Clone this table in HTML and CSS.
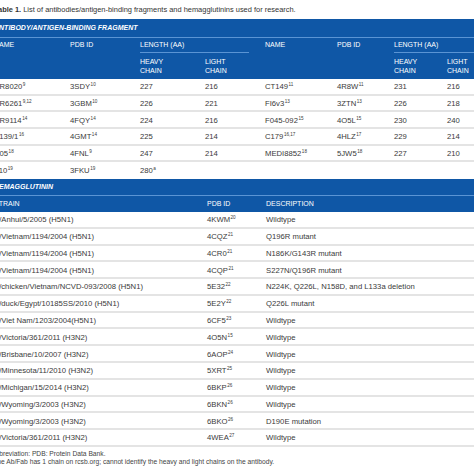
FILE: index.html
```html
<!DOCTYPE html>
<html lang="en">
<head>
<meta charset="utf-8">
<title>Table 1</title>
<link rel="stylesheet" href="styles.css">
</head>
<body>
<div class="page">
  <p class="caption"><b>Table 1.</b> List of antibodies/antigen-binding fragments and hemagglutinins used for research.</p>

  <section class="ab">
    <div class="sec-title">ANTIBODY/ANTIGEN-BINDING FRAGMENT</div>
    <div class="ab-head">
      <div class="h-name c1">NAME</div>
      <div class="h-name c2">PDB ID</div>
      <div class="h-len c3 left-len">LENGTH (AA)</div>
      <div class="h-sub c3">HEAVY<br>CHAIN</div>
      <div class="h-sub c4">LIGHT<br>CHAIN</div>
      <div class="h-name c5">NAME</div>
      <div class="h-name c6">PDB ID</div>
      <div class="h-len c7">LENGTH (AA)</div>
      <div class="h-sub c7">HEAVY<br>CHAIN</div>
      <div class="h-sub c8">LIGHT<br>CHAIN</div>
    </div>
    <div class="ab-row"><span>CR8020<sup>9</sup></span><span>3SDY<sup>10</sup></span><span>227</span><span>216</span><span>CT149<sup>11</sup></span><span>4R8W<sup>11</sup></span><span>231</span><span>216</span></div>
    <div class="ab-row"><span>CR6261<sup>9,12</sup></span><span>3GBM<sup>10</sup></span><span>226</span><span>221</span><span>FI6v3<sup>13</sup></span><span>3ZTN<sup>13</sup></span><span>226</span><span>218</span></div>
    <div class="ab-row"><span>CR9114<sup>14</sup></span><span>4FQY<sup>14</sup></span><span>224</span><span>216</span><span>F045-092<sup>15</sup></span><span>4O5L<sup>15</sup></span><span>230</span><span>240</span></div>
    <div class="ab-row"><span>S139/1<sup>16</sup></span><span>4GMT<sup>14</sup></span><span>225</span><span>214</span><span>C179<sup>16,17</sup></span><span>4HLZ<sup>17</sup></span><span>229</span><span>214</span></div>
    <div class="ab-row"><span>C05<sup>18</sup></span><span>4FNL<sup>9</sup></span><span>247</span><span>214</span><span>MEDI8852<sup>18</sup></span><span>5JW5<sup>18</sup></span><span>227</span><span>210</span></div>
    <div class="ab-row last"><span>F10<sup>19</sup></span><span>3FKU<sup>19</sup></span><span>280<sup>a</sup></span><span></span><span></span><span></span><span></span><span></span></div>
  </section>

  <section class="ha">
    <div class="sec-title ha-title">HEMAGGLUTININ</div>
    <div class="ha-head"><span>STRAIN</span><span>PDB ID</span><span>DESCRIPTION</span></div>
    <div class="ha-row"><span>A/Anhui/5/2005 (H5N1)</span><span>4KWM<sup>20</sup></span><span>Wildtype</span></div>
    <div class="ha-row"><span>A/Vietnam/1194/2004 (H5N1)</span><span>4CQZ<sup>21</sup></span><span>Q196R mutant</span></div>
    <div class="ha-row"><span>A/Vietnam/1194/2004 (H5N1)</span><span>4CR0<sup>21</sup></span><span>N186K/G143R mutant</span></div>
    <div class="ha-row"><span>A/Vietnam/1194/2004 (H5N1)</span><span>4CQP<sup>21</sup></span><span>S227N/Q196R mutant</span></div>
    <div class="ha-row"><span>A/chicken/Vietnam/NCVD-093/2008 (H5N1)</span><span>5E32<sup>22</sup></span><span>N224K, Q226L, N158D, and L133a deletion</span></div>
    <div class="ha-row"><span>A/duck/Egypt/10185SS/2010 (H5N1)</span><span>5E2Y<sup>22</sup></span><span>Q226L mutant</span></div>
    <div class="ha-row"><span>A/Viet Nam/1203/2004(H5N1)</span><span>6CF5<sup>23</sup></span><span>Wildtype</span></div>
    <div class="ha-row"><span>A/Victoria/361/2011 (H3N2)</span><span>4O5N<sup>15</sup></span><span>Wildtype</span></div>
    <div class="ha-row"><span>A/Brisbane/10/2007 (H3N2)</span><span>6AOP<sup>24</sup></span><span>Wildtype</span></div>
    <div class="ha-row"><span>A/Minnesota/11/2010 (H3N2)</span><span>5XRT<sup>25</sup></span><span>Wildtype</span></div>
    <div class="ha-row"><span>A/Michigan/15/2014 (H3N2)</span><span>6BKP<sup>26</sup></span><span>Wildtype</span></div>
    <div class="ha-row"><span>A/Wyoming/3/2003 (H3N2)</span><span>6BKN<sup>26</sup></span><span>Wildtype</span></div>
    <div class="ha-row"><span>A/Wyoming/3/2003 (H3N2)</span><span>6BKO<sup>26</sup></span><span>D190E mutation</span></div>
    <div class="ha-row"><span>A/Victoria/361/2011 (H3N2)</span><span>4WEA<sup>27</sup></span><span>Wildtype</span></div>
  </section>

  <div class="notes">
    <p>Abbreviation: PDB: Protein Data Bank.</p>
    <p><sup>a</sup>The Ab/Fab has 1 chain on rcsb.org; cannot identify the heavy and light chains on the antibody.</p>
  </div>
</div>
</body>
</html>
```

FILE: styles.css
```css
html, body {
  margin: 0;
  padding: 0;
  background: #ffffff;
  overflow: hidden;
}

body {
  font-family: "Liberation Sans", Arial, Helvetica, sans-serif;
  color: #3a3a3a;
}

.page {
  width: 480px;
  margin-left: -6px;
}

.caption {
  margin: 0;
  height: 19px;
  line-height: 19px;
  font-size: 7.45px;
  color: #333333;
  white-space: nowrap;
}

.caption b {
  font-weight: bold;
}

sup {
  font-size: 4.6px;
  vertical-align: 3px;
  line-height: 0;
  margin-left: 0.5px;
}

.sec-title {
  background: #0f57a6;
  color: #ffffff;
  font-size: 7px;
  font-weight: bold;
  font-style: italic;
  height: 18px;
  line-height: 18px;
  border-bottom: 1px solid #5a94d4;
}

.ab-head {
  background: #0f57a6;
  color: #ffffff;
  font-size: 7px;
  display: grid;
  grid-template-columns: 76px 70px 65px 60px 72px 57px 53px 27px;
  grid-template-rows: 15px 26px;
}

.c1 { grid-column: 1; }
.c2 { grid-column: 2; }
.c3 { grid-column: 3; }
.c4 { grid-column: 4; }
.c5 { grid-column: 5; }
.c6 { grid-column: 6; }
.c7 { grid-column: 7; }
.c8 { grid-column: 8; }

.h-name {
  grid-row: 1 / 3;
  padding-top: 2px;
  line-height: 9px;
}

.h-len {
  grid-row: 1;
  grid-column-end: span 2;
  padding-top: 2px;
  line-height: 9px;
  border-bottom: 1px solid #5a94d4;
  box-sizing: border-box;
  height: 15px;
}

.left-len {
  margin-right: 16px;
}

.h-sub {
  grid-row: 2;
  padding-top: 4px;
  line-height: 9px;
}

.ab-row {
  display: grid;
  grid-template-columns: 76px 70px 65px 60px 72px 57px 53px 27px;
  height: 16.667px;
  box-sizing: border-box;
  border-bottom: 2px solid #e4e4e4;
  align-items: center;
  font-size: 7.7px;
  padding-top: 1px;
  white-space: nowrap;
}

.ab-row.last {
  border-bottom: none;
  padding-top: 0;
}

.ha-title {
  height: 16px;
  line-height: 16px;
}

.ha-head {
  background: #0f57a6;
  color: #ffffff;
  font-size: 7px;
  display: grid;
  grid-template-columns: 213px 59px 208px;
  height: 16px;
  align-items: center;
}

.ha-row {
  display: grid;
  grid-template-columns: 213px 59px 208px;
  height: 16.786px;
  box-sizing: border-box;
  border-bottom: 2px solid #e4e4e4;
  align-items: center;
  font-size: 7.7px;
  padding-top: 1px;
  white-space: nowrap;
}

.notes {
  padding-top: 3px;
  margin-left: -3px;
  font-size: 6.7px;
  line-height: 8px;
  color: #444444;
}

.notes p {
  margin: 0;
  white-space: nowrap;
}

.notes sup {
  font-size: 4px;
  vertical-align: 2px;
  margin-left: 0;
}
```
